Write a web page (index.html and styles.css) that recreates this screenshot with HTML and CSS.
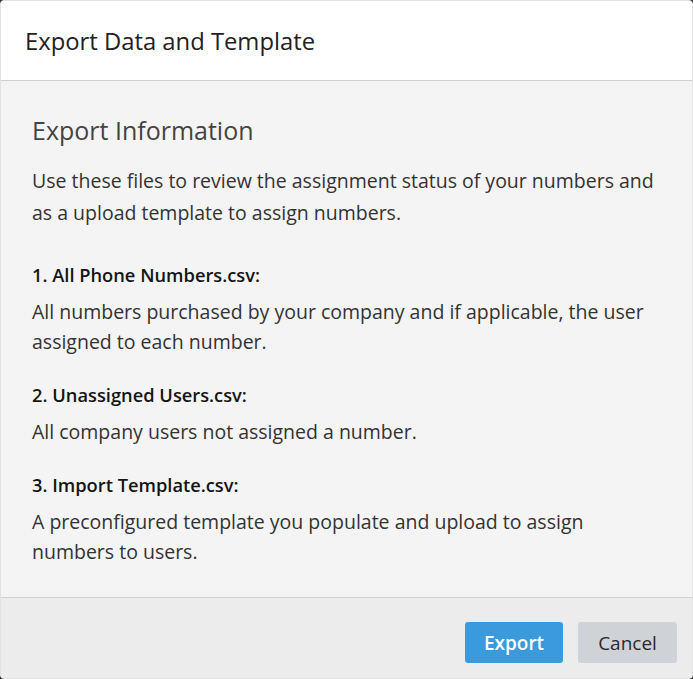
FILE: index.html
```html
<!DOCTYPE html>
<html>
<head>
<meta charset="utf-8">
<link rel="stylesheet" href="styles.css">
</head>
<body>
<div class="modal">
  <div class="modal-header">
    <h1 class="modal-title">Export Data and Template</h1>
  </div>
  <div class="modal-body">
    <h2 class="section-title">Export Information</h2>
    <p class="intro">Use these files to review the assignment status of your numbers and as a upload template to assign numbers.</p>
    <div class="file">
      <h3 class="file-name">1. All Phone Numbers.csv:</h3>
      <p class="file-desc">All numbers purchased by your company and if applicable, the user assigned to each number.</p>
    </div>
    <div class="file">
      <h3 class="file-name">2. Unassigned Users.csv:</h3>
      <p class="file-desc">All company users not assigned a number.</p>
    </div>
    <div class="file">
      <h3 class="file-name">3. Import Template.csv:</h3>
      <p class="file-desc">A preconfigured template you populate and upload to assign numbers to users.</p>
    </div>
  </div>
  <div class="modal-footer">
    <button class="btn btn-primary">Export</button>
    <button class="btn btn-secondary">Cancel</button>
  </div>
</div>
</body>
</html>
```
FILE: styles.css
```css
html, body {
  margin: 0;
  padding: 0;
  background: #2f2f2f;
}
body {
  font-family: "Open Sans", "DejaVu Sans", sans-serif;
  color: #333;
}
.modal {
  width: 693px;
  height: 679px;
  box-sizing: border-box;
  border: 1px solid #e2e2e2;
  border-radius: 4px;
  overflow: hidden;
  display: flex;
  flex-direction: column;
  background: #f4f4f4;
}
.modal-header {
  height: 80px;
  box-sizing: border-box;
  background: #fff;
  border-bottom: 1px solid #cfcfcf;
  display: flex;
  align-items: center;
  padding: 1px 24px 0;
}
.modal-title {
  margin: 0;
  font-size: 23.8px;
  font-weight: 400;
  color: #222;
}
.modal-body {
  flex: 1;
  padding: 34px 31px 0;
  background: #f4f4f4;
}
.section-title {
  margin: 0 0 20px;
  font-size: 25px;
  font-weight: 400;
  color: #444;
  line-height: 30px;
}
.intro {
  margin: 0 0 31px;
  font-size: 19.5px;
  line-height: 32px;
  color: #333;
}
.file {
  margin-bottom: 23px;
}
.file-name {
  margin: 0 0 7px;
  font-size: 18.3px;
  font-weight: 600;
  color: #151515;
  line-height: 30px;
}
.file-desc {
  margin: 0;
  font-size: 19.5px;
  line-height: 30px;
  color: #333;
}
.modal-footer {
  height: 81px;
  box-sizing: border-box;
  border-top: 1px solid #d2d2d2;
  background: #ececec;
  display: flex;
  justify-content: flex-end;
  align-items: flex-start;
  gap: 15px;
  padding: 24px 15px 0;
}
.btn {
  height: 41px;
  border: none;
  border-radius: 3px;
  font-family: "Open Sans", "DejaVu Sans", sans-serif;
  font-size: 19px;
  padding: 0;
  cursor: pointer;
}
.btn-primary {
  background: #3a9adb;
  color: #fff;
  font-weight: 600;
  width: 98px;
}
.btn-secondary {
  background: #cfd2d6;
  color: #2a2a2a;
  width: 99px;
}
```
